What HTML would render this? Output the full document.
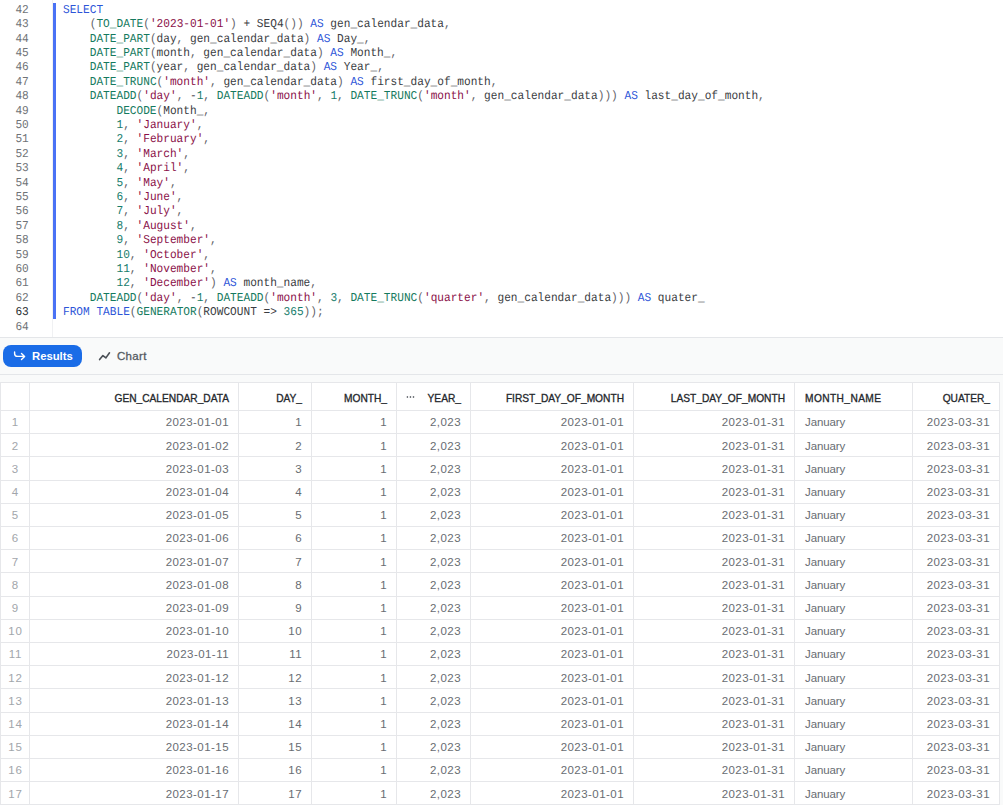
<!DOCTYPE html>
<html><head><meta charset="utf-8"><style>
html,body{margin:0;padding:0;}
body{width:1003px;height:805px;overflow:hidden;background:#fff;position:relative;font-family:"Liberation Sans",sans-serif;}
i{font-style:normal;}
#editor{position:absolute;left:0;top:0;width:1003px;height:337px;background:#fff;}
#gutterline{position:absolute;left:52px;top:0;width:1px;height:337px;background:#f0f1f3;}
#bar{position:absolute;left:53px;top:3px;width:3px;height:316px;background:#4a72f5;}
#nums{position:absolute;left:0;top:2.7px;width:31px;text-align:right;font-family:"Liberation Mono",monospace;font-size:12px;line-height:14.4px;color:#6f7377;text-rendering:geometricPrecision;transform:scaleX(0.928);transform-origin:0 0;}
#nums .act{color:#2b2f33;}
#code{position:absolute;left:63px;top:2.7px;font-family:"Liberation Mono",monospace;font-size:12px;line-height:14.4px;white-space:pre;color:#3c3f43;text-rendering:geometricPrecision;transform:scaleX(0.928);transform-origin:0 0;}
#code .k{color:#2d55d8;}
#code .f{color:#157a5e;}
#code .n{color:#177d6c;}
#code .s{color:#8a1048;}
#code .v{color:#3a3c42;}
#code .p{color:#5f6267;}
#code .o{color:#3a3c42;}
#toolbar{position:absolute;left:0;top:337px;width:1003px;height:38px;box-sizing:border-box;border-top:1px solid #e4e6e9;border-bottom:1px solid #e4e6e9;background:#f9fafa;}
#resbtn{position:absolute;left:3px;top:7px;width:79px;height:22px;border-radius:8px;background:#1a6ce7;color:#fff;font-weight:bold;font-size:11.3px;}
#resbtn span{position:absolute;left:29px;top:5px;}
#chart{position:absolute;left:97px;top:7px;height:22px;color:#555a61;font-weight:normal;font-size:11.5px;letter-spacing:0.3px;-webkit-text-stroke:0.3px #555a61;}
#chart span{position:absolute;left:20px;top:5px;}
#strip{position:absolute;left:0;top:375px;width:1003px;height:7px;background:#f9fafa;}
#table{position:absolute;left:0;top:0;width:1003px;height:805px;}
.vl{position:absolute;top:382px;height:423px;width:1px;background:#e6e7ea;}
.hl{position:absolute;left:0;width:1000px;height:1px;background:#e6e7ea;}
.th{position:absolute;top:384.5px;height:28px;line-height:28px;font-weight:normal;font-size:10.2px;letter-spacing:0px;color:#24272b;-webkit-text-stroke:0.3px #24272b;box-sizing:border-box;padding:0 9px 0 10px;white-space:nowrap;}
.td{position:absolute;margin-top:1.1px;height:23.2px;line-height:23.2px;font-size:11.5px;letter-spacing:0.45px;color:#686c72;box-sizing:border-box;padding:0 9px 0 10px;white-space:nowrap;}
.right{text-align:right;}
.left{text-align:left;}
.rn{text-align:center;color:#a2a6ab;padding:0 0 0 0.8px;font-size:11.5px;letter-spacing:0.8px;}
.nm{letter-spacing:-0.1px;}

#icons{position:absolute;left:0;top:0;z-index:5;pointer-events:none;}
.th.mn{letter-spacing:0.4px;}
#rstrip{position:absolute;left:1000px;top:382px;width:3px;height:423px;background:#f9fafa;}

</style></head><body>
<div id="editor">
  <div id="gutterline"></div>
  <div id="bar"></div>
  <div id="nums"><div>42</div><div>43</div><div>44</div><div>45</div><div>46</div><div>47</div><div>48</div><div>49</div><div>50</div><div>51</div><div>52</div><div>53</div><div>54</div><div>55</div><div>56</div><div>57</div><div>58</div><div>59</div><div>60</div><div>61</div><div>62</div><div class="act">63</div><div>64</div></div>
  <div id="code"><div><i class="k">SELECT</i></div><div>    <i class="p">(</i><i class="f">TO_DATE</i><i class="p">(</i><i class="s">&#x27;2023-01-01&#x27;</i><i class="p">)</i> <i class="o">+</i> <i class="v">SEQ4</i><i class="p">(</i><i class="p">)</i><i class="p">)</i> <i class="k">AS</i> <i class="v">gen_calendar_data</i><i class="p">,</i></div><div>    <i class="f">DATE_PART</i><i class="p">(</i><i class="v">day</i><i class="p">,</i> <i class="v">gen_calendar_data</i><i class="p">)</i> <i class="k">AS</i> <i class="v">Day_</i><i class="p">,</i></div><div>    <i class="f">DATE_PART</i><i class="p">(</i><i class="v">month</i><i class="p">,</i> <i class="v">gen_calendar_data</i><i class="p">)</i> <i class="k">AS</i> <i class="v">Month_</i><i class="p">,</i></div><div>    <i class="f">DATE_PART</i><i class="p">(</i><i class="v">year</i><i class="p">,</i> <i class="v">gen_calendar_data</i><i class="p">)</i> <i class="k">AS</i> <i class="v">Year_</i><i class="p">,</i></div><div>    <i class="f">DATE_TRUNC</i><i class="p">(</i><i class="s">&#x27;month&#x27;</i><i class="p">,</i> <i class="v">gen_calendar_data</i><i class="p">)</i> <i class="k">AS</i> <i class="v">first_day_of_month</i><i class="p">,</i></div><div>    <i class="f">DATEADD</i><i class="p">(</i><i class="s">&#x27;day&#x27;</i><i class="p">,</i> <i class="o">-</i><i class="n">1</i><i class="p">,</i> <i class="f">DATEADD</i><i class="p">(</i><i class="s">&#x27;month&#x27;</i><i class="p">,</i> <i class="n">1</i><i class="p">,</i> <i class="f">DATE_TRUNC</i><i class="p">(</i><i class="s">&#x27;month&#x27;</i><i class="p">,</i> <i class="v">gen_calendar_data</i><i class="p">)</i><i class="p">)</i><i class="p">)</i> <i class="k">AS</i> <i class="v">last_day_of_month</i><i class="p">,</i></div><div>        <i class="f">DECODE</i><i class="p">(</i><i class="v">Month_</i><i class="p">,</i></div><div>        <i class="n">1</i><i class="p">,</i> <i class="s">&#x27;January&#x27;</i><i class="p">,</i></div><div>        <i class="n">2</i><i class="p">,</i> <i class="s">&#x27;February&#x27;</i><i class="p">,</i></div><div>        <i class="n">3</i><i class="p">,</i> <i class="s">&#x27;March&#x27;</i><i class="p">,</i></div><div>        <i class="n">4</i><i class="p">,</i> <i class="s">&#x27;April&#x27;</i><i class="p">,</i></div><div>        <i class="n">5</i><i class="p">,</i> <i class="s">&#x27;May&#x27;</i><i class="p">,</i></div><div>        <i class="n">6</i><i class="p">,</i> <i class="s">&#x27;June&#x27;</i><i class="p">,</i></div><div>        <i class="n">7</i><i class="p">,</i> <i class="s">&#x27;July&#x27;</i><i class="p">,</i></div><div>        <i class="n">8</i><i class="p">,</i> <i class="s">&#x27;August&#x27;</i><i class="p">,</i></div><div>        <i class="n">9</i><i class="p">,</i> <i class="s">&#x27;September&#x27;</i><i class="p">,</i></div><div>        <i class="n">10</i><i class="p">,</i> <i class="s">&#x27;October&#x27;</i><i class="p">,</i></div><div>        <i class="n">11</i><i class="p">,</i> <i class="s">&#x27;November&#x27;</i><i class="p">,</i></div><div>        <i class="n">12</i><i class="p">,</i> <i class="s">&#x27;December&#x27;</i><i class="p">)</i> <i class="k">AS</i> <i class="v">month_name</i><i class="p">,</i></div><div>    <i class="f">DATEADD</i><i class="p">(</i><i class="s">&#x27;day&#x27;</i><i class="p">,</i> <i class="o">-</i><i class="n">1</i><i class="p">,</i> <i class="f">DATEADD</i><i class="p">(</i><i class="s">&#x27;month&#x27;</i><i class="p">,</i> <i class="n">3</i><i class="p">,</i> <i class="f">DATE_TRUNC</i><i class="p">(</i><i class="s">&#x27;quarter&#x27;</i><i class="p">,</i> <i class="v">gen_calendar_data</i><i class="p">)</i><i class="p">)</i><i class="p">)</i> <i class="k">AS</i> <i class="v">quater_</i></div><div><i class="k">FROM</i> <i class="k">TABLE</i><i class="p">(</i><i class="f">GENERATOR</i><i class="p">(</i><i class="v">ROWCOUNT</i> <i class="o">=</i><i class="o">&gt;</i> <i class="n">365</i><i class="p">)</i><i class="p">)</i><i class="p">;</i></div><div>&nbsp;</div></div>
</div>
<div id="toolbar">
  <div id="resbtn"><span>Results</span></div>
  <div id="chart"><span>Chart</span></div>
</div>
<svg id="icons" width="1003" height="805" viewBox="0 0 1003 805"><path d="M14.6 351.9 V353.4 Q14.6 356.4 17.6 356.4 H24.5 M21.5 353.4 L24.6 356.4 L21.5 359.4" fill="none" stroke="#fff" stroke-width="1.4" stroke-linecap="round" stroke-linejoin="round"/><path d="M99.6 359.6 L102.9 355.6 L105.9 357.9 L109.5 352.8" fill="none" stroke="#4b5056" stroke-width="1.6" stroke-linecap="round" stroke-linejoin="round"/><g fill="#676b71"><ellipse cx="407.4" cy="397" rx="0.8" ry="1.05"/><ellipse cx="410.45" cy="397" rx="0.8" ry="1.05"/><ellipse cx="413.5" cy="397" rx="0.8" ry="1.05"/></g></svg>
<div id="strip"></div><div id="rstrip"></div>
<div id="table">
<div class="vl" style="left:0px"></div><div class="vl" style="left:29px"></div><div class="vl" style="left:238px"></div><div class="vl" style="left:311px"></div><div class="vl" style="left:396px"></div><div class="vl" style="left:470px"></div><div class="vl" style="left:633px"></div><div class="vl" style="left:794px"></div><div class="vl" style="left:912px"></div><div class="vl" style="left:999px"></div><div class="hl" style="top:382px"></div><div class="hl" style="top:410px"></div><div class="hl" style="top:433px"></div><div class="hl" style="top:456px"></div><div class="hl" style="top:480px"></div><div class="hl" style="top:503px"></div><div class="hl" style="top:526px"></div><div class="hl" style="top:549px"></div><div class="hl" style="top:572px"></div><div class="hl" style="top:596px"></div><div class="hl" style="top:619px"></div><div class="hl" style="top:642px"></div><div class="hl" style="top:665px"></div><div class="hl" style="top:688px"></div><div class="hl" style="top:712px"></div><div class="hl" style="top:735px"></div><div class="hl" style="top:758px"></div><div class="hl" style="top:781px"></div><div class="hl" style="top:804px"></div><div class="th right" style="left:30px;width:208px">GEN_CALENDAR_DATA</div><div class="th right" style="left:239px;width:72px">DAY_</div><div class="th right" style="left:312px;width:84px">MONTH_</div><div class="th right" style="left:397px;width:73px">YEAR_</div><div class="th right" style="left:471px;width:162px">FIRST_DAY_OF_MONTH</div><div class="th right" style="left:634px;width:160px">LAST_DAY_OF_MONTH</div><div class="th left mn" style="left:795px;width:117px">MONTH_NAME</div><div class="th right" style="left:913px;width:86px">QUATER_</div><div class="td rn" style="left:1px;width:28px;top:410.4px">1</div><div class="td right" style="left:30px;width:208px;top:410.4px">2023-01-01</div><div class="td right" style="left:239px;width:72px;top:410.4px">1</div><div class="td right" style="left:312px;width:84px;top:410.4px">1</div><div class="td right" style="left:397px;width:73px;top:410.4px">2,023</div><div class="td right" style="left:471px;width:162px;top:410.4px">2023-01-01</div><div class="td right" style="left:634px;width:160px;top:410.4px">2023-01-31</div><div class="td left nm" style="left:795px;width:117px;top:410.4px">January</div><div class="td right" style="left:913px;width:86px;top:410.4px">2023-03-31</div><div class="td rn" style="left:1px;width:28px;top:433.6px">2</div><div class="td right" style="left:30px;width:208px;top:433.6px">2023-01-02</div><div class="td right" style="left:239px;width:72px;top:433.6px">2</div><div class="td right" style="left:312px;width:84px;top:433.6px">1</div><div class="td right" style="left:397px;width:73px;top:433.6px">2,023</div><div class="td right" style="left:471px;width:162px;top:433.6px">2023-01-01</div><div class="td right" style="left:634px;width:160px;top:433.6px">2023-01-31</div><div class="td left nm" style="left:795px;width:117px;top:433.6px">January</div><div class="td right" style="left:913px;width:86px;top:433.6px">2023-03-31</div><div class="td rn" style="left:1px;width:28px;top:456.8px">3</div><div class="td right" style="left:30px;width:208px;top:456.8px">2023-01-03</div><div class="td right" style="left:239px;width:72px;top:456.8px">3</div><div class="td right" style="left:312px;width:84px;top:456.8px">1</div><div class="td right" style="left:397px;width:73px;top:456.8px">2,023</div><div class="td right" style="left:471px;width:162px;top:456.8px">2023-01-01</div><div class="td right" style="left:634px;width:160px;top:456.8px">2023-01-31</div><div class="td left nm" style="left:795px;width:117px;top:456.8px">January</div><div class="td right" style="left:913px;width:86px;top:456.8px">2023-03-31</div><div class="td rn" style="left:1px;width:28px;top:480.0px">4</div><div class="td right" style="left:30px;width:208px;top:480.0px">2023-01-04</div><div class="td right" style="left:239px;width:72px;top:480.0px">4</div><div class="td right" style="left:312px;width:84px;top:480.0px">1</div><div class="td right" style="left:397px;width:73px;top:480.0px">2,023</div><div class="td right" style="left:471px;width:162px;top:480.0px">2023-01-01</div><div class="td right" style="left:634px;width:160px;top:480.0px">2023-01-31</div><div class="td left nm" style="left:795px;width:117px;top:480.0px">January</div><div class="td right" style="left:913px;width:86px;top:480.0px">2023-03-31</div><div class="td rn" style="left:1px;width:28px;top:503.2px">5</div><div class="td right" style="left:30px;width:208px;top:503.2px">2023-01-05</div><div class="td right" style="left:239px;width:72px;top:503.2px">5</div><div class="td right" style="left:312px;width:84px;top:503.2px">1</div><div class="td right" style="left:397px;width:73px;top:503.2px">2,023</div><div class="td right" style="left:471px;width:162px;top:503.2px">2023-01-01</div><div class="td right" style="left:634px;width:160px;top:503.2px">2023-01-31</div><div class="td left nm" style="left:795px;width:117px;top:503.2px">January</div><div class="td right" style="left:913px;width:86px;top:503.2px">2023-03-31</div><div class="td rn" style="left:1px;width:28px;top:526.4px">6</div><div class="td right" style="left:30px;width:208px;top:526.4px">2023-01-06</div><div class="td right" style="left:239px;width:72px;top:526.4px">6</div><div class="td right" style="left:312px;width:84px;top:526.4px">1</div><div class="td right" style="left:397px;width:73px;top:526.4px">2,023</div><div class="td right" style="left:471px;width:162px;top:526.4px">2023-01-01</div><div class="td right" style="left:634px;width:160px;top:526.4px">2023-01-31</div><div class="td left nm" style="left:795px;width:117px;top:526.4px">January</div><div class="td right" style="left:913px;width:86px;top:526.4px">2023-03-31</div><div class="td rn" style="left:1px;width:28px;top:549.6px">7</div><div class="td right" style="left:30px;width:208px;top:549.6px">2023-01-07</div><div class="td right" style="left:239px;width:72px;top:549.6px">7</div><div class="td right" style="left:312px;width:84px;top:549.6px">1</div><div class="td right" style="left:397px;width:73px;top:549.6px">2,023</div><div class="td right" style="left:471px;width:162px;top:549.6px">2023-01-01</div><div class="td right" style="left:634px;width:160px;top:549.6px">2023-01-31</div><div class="td left nm" style="left:795px;width:117px;top:549.6px">January</div><div class="td right" style="left:913px;width:86px;top:549.6px">2023-03-31</div><div class="td rn" style="left:1px;width:28px;top:572.8px">8</div><div class="td right" style="left:30px;width:208px;top:572.8px">2023-01-08</div><div class="td right" style="left:239px;width:72px;top:572.8px">8</div><div class="td right" style="left:312px;width:84px;top:572.8px">1</div><div class="td right" style="left:397px;width:73px;top:572.8px">2,023</div><div class="td right" style="left:471px;width:162px;top:572.8px">2023-01-01</div><div class="td right" style="left:634px;width:160px;top:572.8px">2023-01-31</div><div class="td left nm" style="left:795px;width:117px;top:572.8px">January</div><div class="td right" style="left:913px;width:86px;top:572.8px">2023-03-31</div><div class="td rn" style="left:1px;width:28px;top:596.0px">9</div><div class="td right" style="left:30px;width:208px;top:596.0px">2023-01-09</div><div class="td right" style="left:239px;width:72px;top:596.0px">9</div><div class="td right" style="left:312px;width:84px;top:596.0px">1</div><div class="td right" style="left:397px;width:73px;top:596.0px">2,023</div><div class="td right" style="left:471px;width:162px;top:596.0px">2023-01-01</div><div class="td right" style="left:634px;width:160px;top:596.0px">2023-01-31</div><div class="td left nm" style="left:795px;width:117px;top:596.0px">January</div><div class="td right" style="left:913px;width:86px;top:596.0px">2023-03-31</div><div class="td rn" style="left:1px;width:28px;top:619.2px">10</div><div class="td right" style="left:30px;width:208px;top:619.2px">2023-01-10</div><div class="td right" style="left:239px;width:72px;top:619.2px">10</div><div class="td right" style="left:312px;width:84px;top:619.2px">1</div><div class="td right" style="left:397px;width:73px;top:619.2px">2,023</div><div class="td right" style="left:471px;width:162px;top:619.2px">2023-01-01</div><div class="td right" style="left:634px;width:160px;top:619.2px">2023-01-31</div><div class="td left nm" style="left:795px;width:117px;top:619.2px">January</div><div class="td right" style="left:913px;width:86px;top:619.2px">2023-03-31</div><div class="td rn" style="left:1px;width:28px;top:642.4px">11</div><div class="td right" style="left:30px;width:208px;top:642.4px">2023-01-11</div><div class="td right" style="left:239px;width:72px;top:642.4px">11</div><div class="td right" style="left:312px;width:84px;top:642.4px">1</div><div class="td right" style="left:397px;width:73px;top:642.4px">2,023</div><div class="td right" style="left:471px;width:162px;top:642.4px">2023-01-01</div><div class="td right" style="left:634px;width:160px;top:642.4px">2023-01-31</div><div class="td left nm" style="left:795px;width:117px;top:642.4px">January</div><div class="td right" style="left:913px;width:86px;top:642.4px">2023-03-31</div><div class="td rn" style="left:1px;width:28px;top:665.6px">12</div><div class="td right" style="left:30px;width:208px;top:665.6px">2023-01-12</div><div class="td right" style="left:239px;width:72px;top:665.6px">12</div><div class="td right" style="left:312px;width:84px;top:665.6px">1</div><div class="td right" style="left:397px;width:73px;top:665.6px">2,023</div><div class="td right" style="left:471px;width:162px;top:665.6px">2023-01-01</div><div class="td right" style="left:634px;width:160px;top:665.6px">2023-01-31</div><div class="td left nm" style="left:795px;width:117px;top:665.6px">January</div><div class="td right" style="left:913px;width:86px;top:665.6px">2023-03-31</div><div class="td rn" style="left:1px;width:28px;top:688.8px">13</div><div class="td right" style="left:30px;width:208px;top:688.8px">2023-01-13</div><div class="td right" style="left:239px;width:72px;top:688.8px">13</div><div class="td right" style="left:312px;width:84px;top:688.8px">1</div><div class="td right" style="left:397px;width:73px;top:688.8px">2,023</div><div class="td right" style="left:471px;width:162px;top:688.8px">2023-01-01</div><div class="td right" style="left:634px;width:160px;top:688.8px">2023-01-31</div><div class="td left nm" style="left:795px;width:117px;top:688.8px">January</div><div class="td right" style="left:913px;width:86px;top:688.8px">2023-03-31</div><div class="td rn" style="left:1px;width:28px;top:712.0px">14</div><div class="td right" style="left:30px;width:208px;top:712.0px">2023-01-14</div><div class="td right" style="left:239px;width:72px;top:712.0px">14</div><div class="td right" style="left:312px;width:84px;top:712.0px">1</div><div class="td right" style="left:397px;width:73px;top:712.0px">2,023</div><div class="td right" style="left:471px;width:162px;top:712.0px">2023-01-01</div><div class="td right" style="left:634px;width:160px;top:712.0px">2023-01-31</div><div class="td left nm" style="left:795px;width:117px;top:712.0px">January</div><div class="td right" style="left:913px;width:86px;top:712.0px">2023-03-31</div><div class="td rn" style="left:1px;width:28px;top:735.2px">15</div><div class="td right" style="left:30px;width:208px;top:735.2px">2023-01-15</div><div class="td right" style="left:239px;width:72px;top:735.2px">15</div><div class="td right" style="left:312px;width:84px;top:735.2px">1</div><div class="td right" style="left:397px;width:73px;top:735.2px">2,023</div><div class="td right" style="left:471px;width:162px;top:735.2px">2023-01-01</div><div class="td right" style="left:634px;width:160px;top:735.2px">2023-01-31</div><div class="td left nm" style="left:795px;width:117px;top:735.2px">January</div><div class="td right" style="left:913px;width:86px;top:735.2px">2023-03-31</div><div class="td rn" style="left:1px;width:28px;top:758.4px">16</div><div class="td right" style="left:30px;width:208px;top:758.4px">2023-01-16</div><div class="td right" style="left:239px;width:72px;top:758.4px">16</div><div class="td right" style="left:312px;width:84px;top:758.4px">1</div><div class="td right" style="left:397px;width:73px;top:758.4px">2,023</div><div class="td right" style="left:471px;width:162px;top:758.4px">2023-01-01</div><div class="td right" style="left:634px;width:160px;top:758.4px">2023-01-31</div><div class="td left nm" style="left:795px;width:117px;top:758.4px">January</div><div class="td right" style="left:913px;width:86px;top:758.4px">2023-03-31</div><div class="td rn" style="left:1px;width:28px;top:781.6px">17</div><div class="td right" style="left:30px;width:208px;top:781.6px">2023-01-17</div><div class="td right" style="left:239px;width:72px;top:781.6px">17</div><div class="td right" style="left:312px;width:84px;top:781.6px">1</div><div class="td right" style="left:397px;width:73px;top:781.6px">2,023</div><div class="td right" style="left:471px;width:162px;top:781.6px">2023-01-01</div><div class="td right" style="left:634px;width:160px;top:781.6px">2023-01-31</div><div class="td left nm" style="left:795px;width:117px;top:781.6px">January</div><div class="td right" style="left:913px;width:86px;top:781.6px">2023-03-31</div><div class="td rn" style="left:1px;width:28px;top:804.8px">18</div><div class="td right" style="left:30px;width:208px;top:804.8px">2023-01-18</div><div class="td right" style="left:239px;width:72px;top:804.8px">18</div><div class="td right" style="left:312px;width:84px;top:804.8px">1</div><div class="td right" style="left:397px;width:73px;top:804.8px">2,023</div><div class="td right" style="left:471px;width:162px;top:804.8px">2023-01-01</div><div class="td right" style="left:634px;width:160px;top:804.8px">2023-01-31</div><div class="td left nm" style="left:795px;width:117px;top:804.8px">January</div><div class="td right" style="left:913px;width:86px;top:804.8px">2023-03-31</div>
</div>
</body></html>
